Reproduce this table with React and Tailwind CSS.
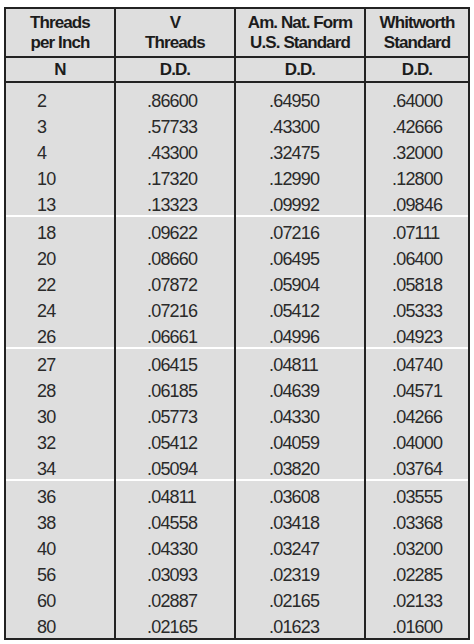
const groups = [
  [
    ['2', '.86600', '.64950', '.64000'],
    ['3', '.57733', '.43300', '.42666'],
    ['4', '.43300', '.32475', '.32000'],
    ['10', '.17320', '.12990', '.12800'],
    ['13', '.13323', '.09992', '.09846'],
  ],
  [
    ['18', '.09622', '.07216', '.07111'],
    ['20', '.08660', '.06495', '.06400'],
    ['22', '.07872', '.05904', '.05818'],
    ['24', '.07216', '.05412', '.05333'],
    ['26', '.06661', '.04996', '.04923'],
  ],
  [
    ['27', '.06415', '.04811', '.04740'],
    ['28', '.06185', '.04639', '.04571'],
    ['30', '.05773', '.04330', '.04266'],
    ['32', '.05412', '.04059', '.04000'],
    ['34', '.05094', '.03820', '.03764'],
  ],
  [
    ['36', '.04811', '.03608', '.03555'],
    ['38', '.04558', '.03418', '.03368'],
    ['40', '.04330', '.03247', '.03200'],
    ['56', '.03093', '.02319', '.02285'],
    ['60', '.02887', '.02165', '.02133'],
    ['80', '.02165', '.01623', '.01600'],
  ],
];

const cols = [
  { w: 'w-[110px] border-r-2', pad: 'pl-[31px]', head: ['Threads', 'per Inch'], sub: 'N' },
  { w: 'w-[120px] border-r-2', pad: 'pl-[31px]', head: ['V', 'Threads'], sub: 'D.D.' },
  { w: 'w-[130px] border-r-2', pad: 'pl-[33px]', head: ['Am. Nat. Form', 'U.S. Standard'], sub: 'D.D.' },
  { w: 'w-[102px]', pad: 'pl-[26px]', head: ['Whitworth', 'Standard'], sub: 'D.D.' },
];

const App = () => {
  return (
    <div className="w-[474px] h-[644px] bg-white pt-[7px] pl-[4px] font-['Liberation_Sans',Arial,sans-serif]">
      <div className="w-[466px] h-[633px] border-2 border-[#222] bg-[#dedede] flex flex-col">
        <div className="flex h-[49px] border-b-2 border-[#222]">
          {cols.map((c, i) => (
            <div
              key={i}
              className={`${c.w} border-[#222] flex flex-col justify-center items-center text-[17px] leading-[20px] font-bold tracking-[-0.9px] text-[#1c1c1c]`}
            >
              <span>{c.head[0]}</span>
              <span>{c.head[1]}</span>
            </div>
          ))}
        </div>
        <div className="flex h-[25px] border-b-2 border-[#222]">
          {cols.map((c, i) => (
            <div
              key={i}
              className={`${c.w} border-[#222] flex items-center justify-center text-[17px] leading-[20px] font-bold tracking-[-0.9px] text-[#1c1c1c]`}
            >
              {c.sub}
            </div>
          ))}
        </div>
        <div className="flex flex-1">
          {cols.map((c, ci) => (
            <div key={ci} className={`${c.w} border-[#222] flex flex-col pt-[2px]`}>
              {groups.map((g, gi) => (
                <div key={gi} className={gi > 0 ? 'border-t-2 border-white' : ''}>
                  {g.map((row, ri) => (
                    <div
                      key={ri}
                      className={`h-[26px] pt-[7px] ${c.pad} text-[18px] leading-[19px] tracking-[-0.8px] text-[#2a2a2a]`}
                    >
                      {row[ci]}
                    </div>
                  ))}
                </div>
              ))}
            </div>
          ))}
        </div>
      </div>
    </div>
  );
};

export default App;
